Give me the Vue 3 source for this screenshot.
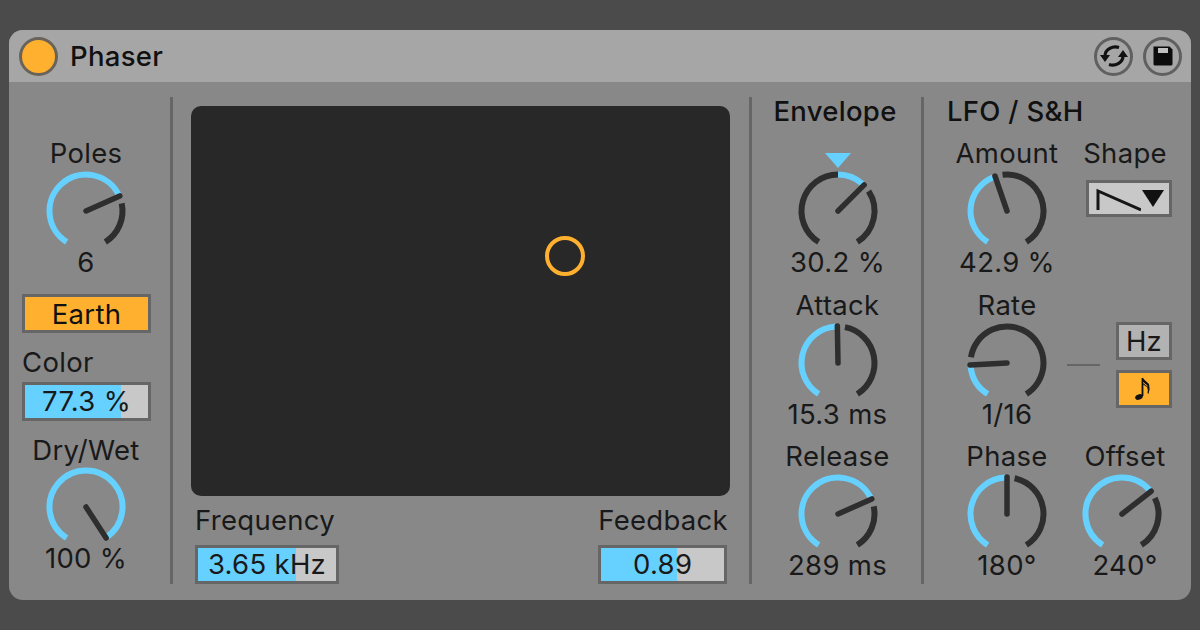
<script setup>
import { h } from 'vue';

const BLUE = '#66d1ff';
const DARK = '#2e2e2e';
const RADIUS = 36.5;

const point = (deg, r) => {
  const a = (deg * Math.PI) / 180;
  return [r * Math.sin(a), -r * Math.cos(a)];
};

const arc = (from, to) => {
  const [x1, y1] = point(from, RADIUS);
  const [x2, y2] = point(to, RADIUS);
  const large = to - from > 180 ? 1 : 0;
  return `M${x1} ${y1}A${RADIUS} ${RADIUS} 0 ${large} 1 ${x2} ${y2}`;
};

// Angles are degrees from 12 o'clock, the travel runs from -148 to 148.
const Knob = (props) => {
  const origin = props.origin ?? -148;
  const needle = props.needle;
  const [nx, ny] = point(needle, 37);
  const parts = [];
  const add = (from, to, stroke) => {
    if (to > from) {
      parts.push(h('path', { d: arc(from, to), fill: 'none', stroke, 'stroke-width': 6 }));
    }
  };
  add(-148, origin, DARK);
  add(origin, needle >= 140 ? 148 : needle - 3, BLUE);
  add(needle + 12, 148, DARK);
  parts.push(h('line', { x1: 0, y1: 0, x2: nx, y2: ny, stroke: DARK, 'stroke-width': 5.5, 'stroke-linecap': 'round' }));
  return h('svg', { width: 86, height: 86, viewBox: '-43 -43 86 86' }, parts);
};
Knob.props = ['needle', 'origin'];

const sliders = {
  color: { text: '77.3 %', fill: 78 },
  frequency: { text: '3.65 kHz', fill: 71 },
  feedback: { text: '0.89', fill: 62 },
};
</script>

<template>
  <main class="device">
    <header class="title-bar">
      <span class="power"></span>
      <span class="name">Phaser</span>
      <button class="round-btn">
        <svg width="32" height="32" viewBox="-16 -16 32 32" fill="none" stroke="#111" stroke-width="3.2">
          <path d="M5-8.500C-1-10.500-9-7-9 0" />
          <path d="M-5 8.500C1 10.500 9 7 9 0" />
          <path d="M-14-1H-4L-9 6Z" fill="#111" stroke="none" />
          <path d="M14 1H4L9-6Z" fill="#111" stroke="none" />
        </svg>
      </button>
      <button class="round-btn">
        <svg width="32" height="32" viewBox="-16 -16 32 32">
          <path d="M-9.500-9.500H6.500L9.500-6.500V8Q9.500 9.500 8 9.500H-8Q-9.500 9.500-9.500 8Z" fill="#0c0c0c" />
          <rect x="-5" y="-8" width="10" height="5" fill="#c0c0c0" />
        </svg>
      </button>
    </header>

    <div class="columns">
      <section class="col col-global">
        <div class="knob-block">
          <div class="label">Poles</div>
          <Knob :needle="66" />
          <div class="value">6</div>
        </div>
        <div class="toggle on wide">Earth</div>
        <div class="label left color-label">Color</div>
        <div class="slider wide">
          <div class="fill" :style="{ width: sliders.color.fill + '%' }"></div>
          <span>{{ sliders.color.text }}</span>
        </div>
        <div class="knob-block drywet">
          <div class="label">Dry/Wet</div>
          <Knob :needle="147" />
          <div class="value">100 %</div>
        </div>
      </section>

      <section class="col col-xy">
        <div class="xy-display">
          <span class="xy-handle"></span>
        </div>
        <div class="xy-controls">
          <div class="xy-param">
            <div class="label left">Frequency</div>
            <div class="slider freq">
              <div class="fill" :style="{ width: sliders.frequency.fill + '%' }"></div>
              <span>{{ sliders.frequency.text }}</span>
            </div>
          </div>
          <div class="xy-param">
            <div class="label">Feedback</div>
            <div class="slider feedback">
              <div class="fill" :style="{ width: sliders.feedback.fill + '%' }"></div>
              <span>{{ sliders.feedback.text }}</span>
            </div>
          </div>
        </div>
      </section>

      <section class="col col-env">
        <h2>Envelope</h2>
        <div class="knob-block">
          <div class="label marker-slot"><span class="marker"></span></div>
          <Knob :needle="45" :origin="0" />
          <div class="value">30.2 %</div>
        </div>
        <div class="knob-block">
          <div class="label">Attack</div>
          <Knob :needle="-1" />
          <div class="value">15.3 ms</div>
        </div>
        <div class="knob-block">
          <div class="label">Release</div>
          <Knob :needle="66" />
          <div class="value">289 ms</div>
        </div>
      </section>

      <section class="col col-lfo">
        <h2>LFO / S&amp;H</h2>
        <div class="lfo-grid">
          <div class="knob-block">
            <div class="label">Amount</div>
            <Knob :needle="-19" />
            <div class="value">42.9 %</div>
          </div>
          <div class="shape-cell">
            <div class="label">Shape</div>
            <div class="dropdown">
              <svg width="46" height="26" viewBox="0 0 46 26" fill="none" stroke="#161616" stroke-width="3">
                <path d="M3 24V5L46 24" />
              </svg>
              <svg width="22" height="17" viewBox="0 0 22 17"><path d="M0 0H22L11 17Z" fill="#111" /></svg>
            </div>
          </div>
          <div class="knob-block">
            <div class="label">Rate</div>
            <Knob :needle="-93" />
            <div class="value">1/16</div>
          </div>
          <div class="rate-mode">
            <span class="link-line"></span>
            <div class="mode-buttons">
              <div class="toggle small">Hz</div>
              <div class="toggle on small">
                <svg width="18" height="24" viewBox="0 0 18 24">
                  <ellipse cx="4" cy="20" rx="4" ry="2.600" fill="#111" transform="rotate(-20 4 20)" />
                  <path d="M7.500 19V1" stroke="#111" stroke-width="1.800" />
                  <path d="M7.500 1L14 7Q15.500 12 13.500 17L12.500 16Q13.500 13 12 10L7.500 7Z" fill="#111" />
                  <path d="M8 5.500L12.500 9" stroke="#ffb02e" stroke-width="1" />
                </svg>
              </div>
            </div>
          </div>
          <div class="knob-block">
            <div class="label">Phase</div>
            <Knob :needle="0" />
            <div class="value">180°</div>
          </div>
          <div class="knob-block offset">
            <div class="label">Offset</div>
            <Knob :needle="52" />
            <div class="value">240°</div>
          </div>
        </div>
      </section>
    </div>
  </main>
</template>

<style>
body {
  background: #4b4b4b;
}
</style>

<style scoped>
.device {
  box-sizing: border-box;
  width: 1182px;
  height: 570px;
  margin: 30px 9px;
  background: #888;
  border-radius: 14px;
  overflow: hidden;
  color: #191919;
  font-family: Inter, "Liberation Sans", sans-serif;
  font-size: 27.5px;
  letter-spacing: 0.3px;
}

/* Title bar */
.title-bar {
  display: flex;
  align-items: center;
  gap: 10px;
  height: 52px;
  padding: 0 9px 0 10px;
  background: #a6a6a6;
}

.power {
  box-sizing: border-box;
  width: 39px;
  height: 39px;
  border-radius: 50%;
  background: #ffb02e;
  border: 3px solid #6a635a;
}

.name {
  flex: 1;
  margin-left: 2px;
  font-weight: 500;
  color: #111;
}

.round-btn {
  box-sizing: border-box;
  display: flex;
  align-items: center;
  justify-content: center;
  width: 39px;
  height: 39px;
  padding: 0;
  border-radius: 50%;
  border: 3px solid #606060;
  background: transparent;
}

/* Columns */
.columns {
  display: flex;
  height: 487px;
  padding-top: 15px;
}

.col {
  box-sizing: border-box;
  height: 487px;
  border-right: 3px solid #666;
}

.col-global {
  width: 164px;
  padding: 41px 20px 0 13px;
}

.col-xy {
  width: 579px;
  padding: 9px 19px 0 18px;
}

.col-env {
  width: 172px;
  padding-left: 2px;
}

.col-lfo {
  flex: 1;
  border-right: 0;
  padding-left: 23px;
}

h2 {
  margin: 0 0 13px;
  height: 28px;
  line-height: 28px;
  font-size: 27.5px;
  font-weight: 500;
  color: #111;
  white-space: nowrap;
}

.col-env h2 {
  text-align: center;
  margin-right: 5px;
}

/* Knobs */
.knob-block {
  display: flex;
  flex-direction: column;
  align-items: center;
  height: 139px;
  margin-bottom: 12.5px;
}

.knob-block svg {
  flex: none;
}

.label {
  height: 30px;
  line-height: 30px;
  text-align: center;
  white-space: nowrap;
}

.label.left {
  text-align: left;
}

.value {
  height: 30px;
  line-height: 30px;
  margin-top: -7px;
  text-align: center;
  white-space: nowrap;
}

.marker-slot {
  display: flex;
  align-items: flex-end;
}

.marker {
  width: 0;
  height: 0;
  border-left: 13px solid transparent;
  border-right: 13px solid transparent;
  border-top: 15px solid #66d1ff;
}

/* Toggles and sliders */
.toggle {
  box-sizing: border-box;
  display: flex;
  align-items: center;
  justify-content: center;
  border: 3px solid #666;
  background: #b2b2b2;
}

.toggle.on {
  background: #ffb02e;
  color: #111;
}

.wide {
  width: 129px;
  height: 39px;
}

.col-global .toggle {
  margin-top: 17px;
}

.color-label {
  margin-top: 14px;
  margin-bottom: 5px;
}

.slider {
  box-sizing: border-box;
  position: relative;
  height: 39px;
  border: 3px solid #666;
  background: #c8c8c8;
  text-align: center;
  line-height: 33px;
}

.slider span {
  position: relative;
}

.fill {
  position: absolute;
  left: 0;
  top: 0;
  bottom: 0;
  background: #66d1ff;
}

.drywet {
  margin-top: 14px;
}

.drywet .label {
  margin-bottom: -1px;
}

/* XY */
.xy-display {
  position: relative;
  height: 390px;
  border-radius: 10px;
  background: #282828;
}

.xy-handle {
  position: absolute;
  left: 354px;
  top: 130px;
  box-sizing: border-box;
  width: 40px;
  height: 40px;
  border-radius: 50%;
  border: 4px solid #ffb02e;
}

.xy-controls {
  display: flex;
  justify-content: space-between;
  padding: 9px 2px 0 4px;
}

.xy-param .slider {
  margin-top: 10px;
}

.xy-param .label {
  text-align: right;
}

.xy-param .label.left {
  text-align: left;
}

.freq {
  width: 144px;
}

.feedback {
  width: 129px;
}

/* LFO */
.lfo-grid {
  display: grid;
  grid-template-columns: 120px 116px;
}

.shape-cell {
  display: flex;
  flex-direction: column;
}

.dropdown {
  box-sizing: border-box;
  display: flex;
  align-items: center;
  justify-content: space-between;
  width: 86px;
  height: 37px;
  margin: 12px 0 0 19px;
  padding: 0 5px 0 6px;
  border: 3px solid #666;
  background: #c8c8c8;
}

.rate-mode {
  display: flex;
  align-items: center;
  height: 139px;
}

.link-line {
  width: 33px;
  height: 2px;
  margin-top: 12px;
  background: #666;
}

.mode-buttons {
  display: flex;
  flex-direction: column;
  gap: 10px;
  margin-left: 16px;
  margin-top: 12px;
}

.small {
  width: 56px;
  height: 38px;
}

.offset svg {
  margin-right: 6px;
}
</style>
